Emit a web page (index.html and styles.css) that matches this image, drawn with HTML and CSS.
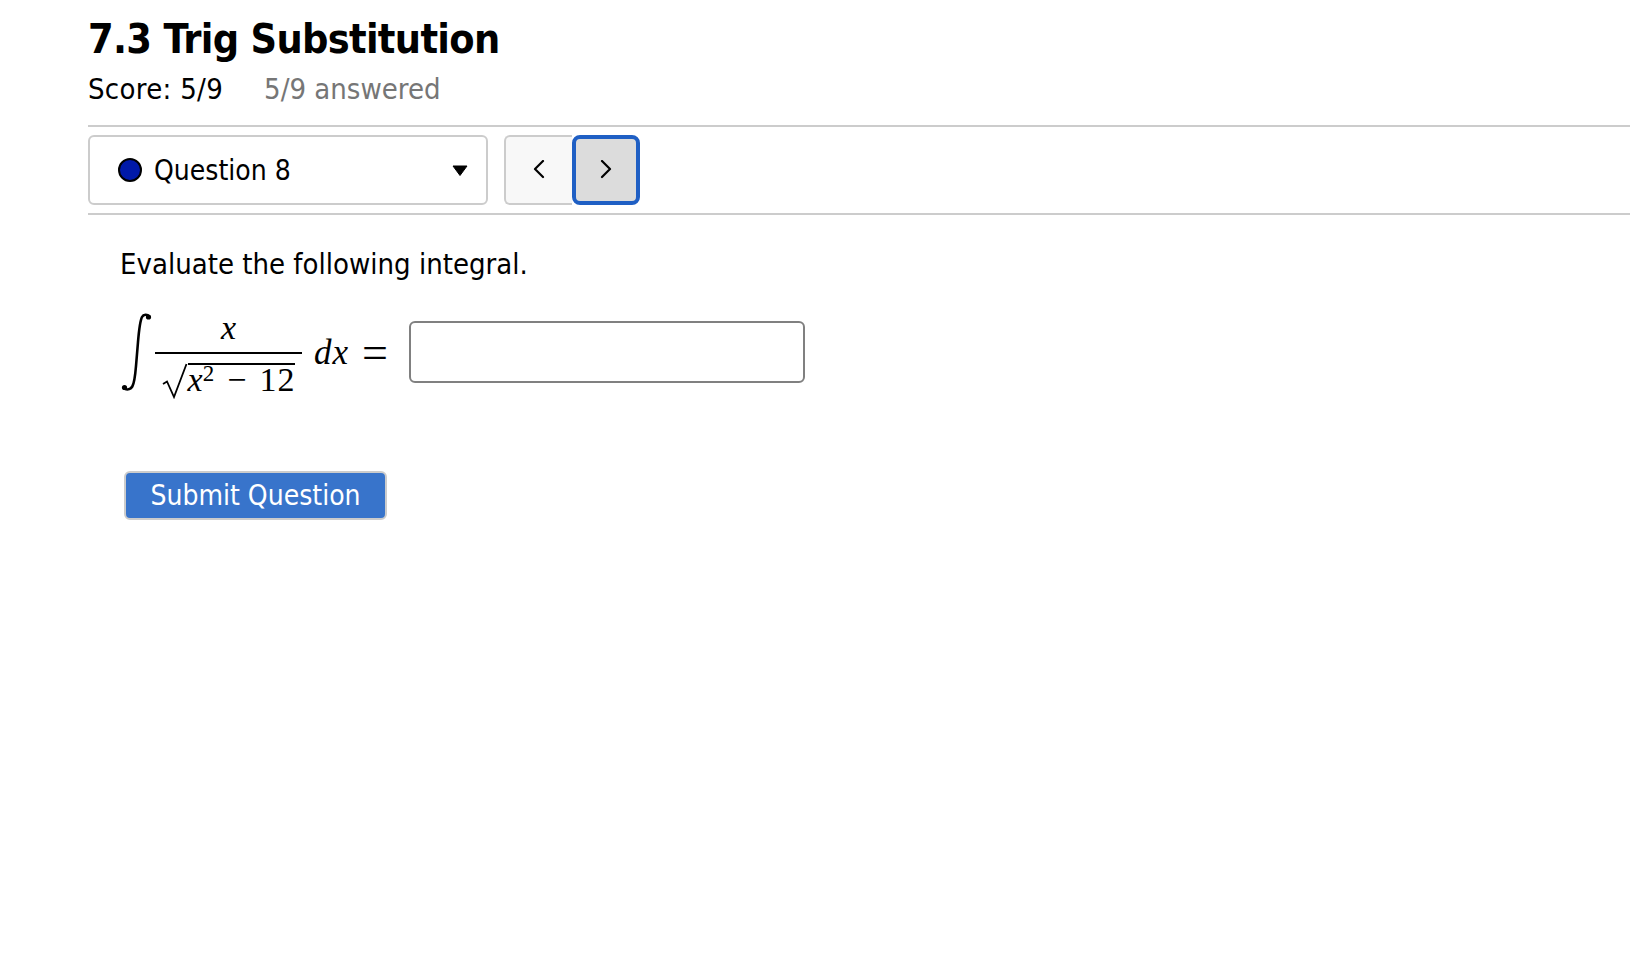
FILE: index.html
```html
<!DOCTYPE html>
<html lang="en">
<head>
    <meta charset="UTF-8">
    <meta name="viewport" content="width=device-width, initial-scale=1.0">
    <title>7.3 Trig Substitution</title>
    <link rel="stylesheet" href="styles.css">
</head>
<body>
    <div class="container">
        <h1>7.3 Trig Substitution</h1>
        <div class="score-line">
            <span class="score">Score: 5/9</span>
            <span class="answered">5/9 answered</span>
        </div>

        <div class="question-nav">
            <div class="question-select">
                <span class="status-dot"></span>
                <span class="question-label">Question 8</span>
                <svg class="caret" width="16" height="11" viewBox="0 0 16 11"><path d="M1 1h14L8 10.500z" fill="#000" stroke="#000" stroke-linejoin="round"/></svg>
            </div>
            <div class="nav-buttons">
                <button class="nav-btn">
                    <svg width="14" height="20" viewBox="0 0 14 20"><path d="M11 1L3 9l8 8" fill="none" stroke="#000" stroke-width="2.200" stroke-linecap="round" stroke-linejoin="round"/></svg>
                </button>
                <button class="nav-btn nav-btn-active">
                    <svg width="14" height="20" viewBox="0 0 14 20"><path d="M3 1l8 8-8 8" fill="none" stroke="#000" stroke-width="2.200" stroke-linecap="round" stroke-linejoin="round"/></svg>
                </button>
            </div>
        </div>

        <div class="question-body">
            <p class="prompt">Evaluate the following integral.</p>
            <div class="math-row">
                <svg class="integral" width="34" height="82" viewBox="0 0 34 82"><path d="M31 4.500c-1.500-2.500-5.500-2.500-7 0.500C22 9 21 18 20 30L18 54c-.9 11-1.700 17-3.700 20.500-1.500 2.500-4.500 3.500-7 2.500" fill="none" stroke="#000" stroke-width="2.600" stroke-linecap="round"/><circle cx="30.500" cy="5" r="2.600"/><circle cx="6.500" cy="75.500" r="2.600"/></svg>
                <div class="fraction">
                    <div class="numerator">x</div>
                    <div class="denominator">
                        <svg class="radical" width="26" height="36" viewBox="0 0 26 36"><path d="M1 21l4-2.500L12 34 24.500 1" fill="none" stroke="#000" stroke-width="1.800"/></svg>
                        <span class="radicand"><i>x</i><sup>2</sup><span class="minus">−</span><span class="digits">12</span></span>
                    </div>
                </div>
                <span class="dx"><i>dx</i></span>
                <span class="equals">=</span>
                <input class="answer" type="text">
            </div>
            <button class="submit-btn">Submit Question</button>
        </div>
    </div>
</body>
</html>
```

FILE: styles.css
```css
body {
    margin: 0;
    background: #fff;
    color: #000;
    font-family: "DejaVu Sans Condensed", "DejaVu Sans", sans-serif;
}
.container {
    padding: 0 0 0 88px;
}
h1 {
    margin: 0;
    padding-top: 13px;
    font-size: 41px;
    letter-spacing: -0.7px;
    line-height: 52px;
    font-weight: 700;
}
.score-line {
    display: flex;
    gap: 41px;
    margin-top: 6px;
    font-size: 29px;
    line-height: 36px;
    height: 54px;
}
.score { letter-spacing: 0.300px; }
.answered { color: #767676; }
.question-nav {
    display: flex;
    gap: 16px;
    border-top: 2px solid #ccc;
    border-bottom: 2px solid #ccc;
    padding: 8px 0;
    height: 70px;
}
.question-select {
    display: flex;
    align-items: center;
    width: 400px;
    box-sizing: border-box;
    border: 2px solid #ccc;
    border-radius: 6px;
    padding: 0 18px 0 28px;
    background: #fff;
}
.status-dot {
    width: 20px;
    height: 20px;
    border: 2px solid #000;
    border-radius: 50%;
    background: #0019a8;
}
.question-label {
    flex: 1;
    margin-left: 12px;
    font-size: 28px;
}
.nav-buttons { display: flex; }
.nav-btn {
    display: flex;
    align-items: center;
    justify-content: center;
    width: 68px;
    padding: 0;
    background: #f8f8f8;
    border: 2px solid #ccc;
    border-right: 0;
    border-radius: 6px 0 0 6px;
}
.nav-btn-active {
    width: 68px;
    background: #dcdcdc;
    border: 4px solid #1f5fc4;
    border-radius: 8px;
}
.question-body {
    padding: 31px 0 0 32px;
}
.prompt {
    margin: 0;
    font-size: 29px;
    line-height: 36px;
}
.math-row {
    display: flex;
    align-items: center;
    margin-top: 28px;
    font-family: "Liberation Serif", serif;
    font-size: 34px;
}
.integral { margin-left: -2px; }
.fraction {
    display: flex;
    flex-direction: column;
    align-items: center;
    margin-left: 3px;
    width: 147px;
}
.numerator {
    width: 100%;
    text-align: center;
    font-style: italic;
    line-height: 36px;
    padding-bottom: 6px;
    border-bottom: 2px solid #000;
}
.denominator {
    display: flex;
    align-items: flex-start;
    height: 42px;
    padding-top: 9px;
    box-sizing: border-box;
}
.radicand {
    border-top: 2px solid #000;
    line-height: 30px;
    white-space: nowrap;
    height: 30px;
}
.radicand sup {
    font-size: 23px;
    line-height: 0;
    vertical-align: 10px;
}
.minus { margin: 0 13px; }
.digits { letter-spacing: 1px; }
.dx { margin-left: 12px; font-size: 35px; letter-spacing: 1px; }
.equals { margin-left: 13px; font-size: 46px; line-height: 40px; }
.answer {
    width: 396px;
    height: 62px;
    box-sizing: border-box;
    margin: 0 0 2px 21px;
    border: 2px solid #808080;
    border-radius: 6px;
    background: #fff;
}
.submit-btn {
    display: block;
    width: 263px;
    height: 49px;
    margin: 75px 0 0 4px;
    padding: 0;
    background: #3874cb;
    color: #fff;
    border: 2px solid #ccc;
    border-radius: 6px;
    font-family: "DejaVu Sans Condensed", "DejaVu Sans", sans-serif;
    font-size: 28px;
}
```
